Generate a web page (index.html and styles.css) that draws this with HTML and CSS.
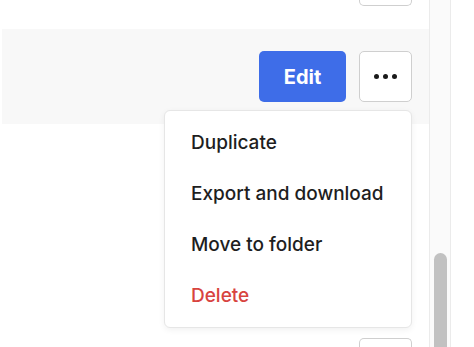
FILE: index.html
```html
<!DOCTYPE html>
<html>
<head>
<meta charset="utf-8">
<link rel="stylesheet" href="styles.css">
</head>
<body>
<div class="page">
  <div class="content">
    <div class="row row-top">
      <div class="stub stub-top"></div>
    </div>
    <div class="row row-active">
      <div class="actions">
        <button class="btn-edit">Edit</button>
        <button class="btn-more" aria-label="More">
          <span class="dot"></span><span class="dot"></span><span class="dot"></span>
        </button>
      </div>
      <div class="menu">
        <div class="menu-item">Duplicate</div>
        <div class="menu-item">Export and download</div>
        <div class="menu-item">Move to folder</div>
        <div class="menu-item danger">Delete</div>
      </div>
    </div>
    <div class="row row-bottom">
      <div class="stub stub-bottom"></div>
    </div>
  </div>
  <div class="scrollbar">
    <div class="thumb"></div>
  </div>
</div>
</body>
</html>
```

FILE: styles.css
```css
html, body {
  margin: 0;
  padding: 0;
  background: #ffffff;
  font-family: Inter, "Noto Sans", sans-serif;
  overflow: hidden;
}
.page {
  display: flex;
  width: 474px;
  height: 347px;
  overflow: hidden;
}
.content {
  width: 429px;
  flex: none;
  position: relative;
}
.row {
  display: flex;
  justify-content: flex-end;
  align-items: flex-start;
  padding-right: 17px;
  box-sizing: border-box;
}
.row-top {
  height: 29px;
}
.row-active {
  position: relative;
  height: 95px;
  margin-left: 2px;
  background: #f8f8f8;
  padding-top: 22px;
}
.row-bottom {
  padding-top: 214px;
}
.stub {
  width: 53px;
  box-sizing: border-box;
  background: #ffffff;
  border: 1px solid #cfcfcf;
}
.stub-top {
  height: 6px;
  border-top: none;
  border-radius: 0 0 5px 5px;
}
.stub-bottom {
  height: 12px;
  border-bottom: none;
  border-radius: 5px 5px 0 0;
}
.actions {
  display: flex;
  gap: 13px;
  align-items: flex-start;
}
button {
  font-family: inherit;
  margin: 0;
  box-sizing: border-box;
}
.btn-edit {
  width: 87px;
  height: 51px;
  background: #3e6de8;
  color: #ffffff;
  border: none;
  border-radius: 5px;
  font-size: 20px;
  font-weight: 700;
  padding: 0;
}
.btn-more {
  width: 53px;
  height: 51px;
  background: #ffffff;
  border: 1px solid #cfcfcf;
  border-radius: 5px;
  display: flex;
  align-items: center;
  justify-content: center;
  gap: 4px;
  padding: 0;
}
.dot {
  width: 5px;
  height: 5px;
  border-radius: 50%;
  background: #1a1a1a;
}
.menu {
  position: absolute;
  top: 81px;
  right: 17px;
  width: 248px;
  box-sizing: border-box;
  background: #ffffff;
  border: 1px solid #e6e6e6;
  border-radius: 6px;
  box-shadow: 0 2px 6px rgba(0, 0, 0, 0.06);
  padding: 6px 0;
  z-index: 2;
}
.menu-item {
  height: 51px;
  display: flex;
  align-items: center;
  padding-left: 26px;
  font-size: 19px;
  font-weight: 500;
  color: #1e1e1e;
}
.menu-item.danger {
  color: #d8443f;
}
.scrollbar {
  width: 22px;
  height: 347px;
  flex: none;
  background: #fafafa;
  border-left: 1px solid #ebebeb;
  border-right: 1px solid #ebebeb;
  display: flex;
  justify-content: center;
  align-items: flex-start;
  padding-top: 253px;
  box-sizing: border-box;
}
.thumb {
  width: 13px;
  height: 120px;
  flex: none;
  border-radius: 7px;
  background: #c1c1c1;
}
```
